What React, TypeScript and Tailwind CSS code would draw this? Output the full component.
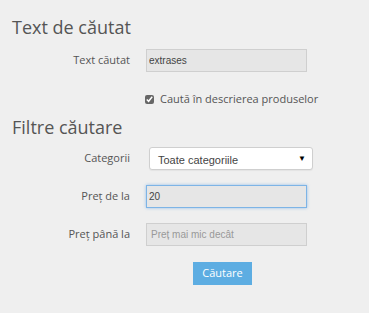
import React from 'react';

const sans = { fontFamily: '"Open Sans", "Liberation Sans", sans-serif' };
const arial = { fontFamily: '"Liberation Sans", Arial, sans-serif' };

function Row({ label, children, className = '' }: { label: string; children: React.ReactNode; className?: string }) {
  return (
    <div className={`flex h-[23px] items-center ${className}`}>
      <label className="w-[130px] text-right text-[11px] text-[#555]">{label}</label>
      <div className="ml-[16px] flex">{children}</div>
    </div>
  );
}

export default function App() {
  const [price, setPrice] = React.useState('20');
  const [desc, setDesc] = React.useState(true);

  return (
    <div className="min-h-[313px] w-[369px] bg-[#efefef] pt-[14px]" style={sans}>
      <h2 className="pl-[12px] text-[18px] leading-[26px] text-[#555]">Text de căutat</h2>
      <Row label="Text căutat" className="mt-[9px]">
        <input
          className="h-[23px] w-[161px] border border-[#cfcfcf] bg-[#e6e6e6] px-[2px] text-[10px] text-[#444] outline-none"
          style={arial}
          defaultValue="extrases"
        />
      </Row>
      <div className="mt-[20px] flex items-center pl-[145px]">
        <input
          type="checkbox"
          checked={desc}
          onChange={(e) => setDesc(e.target.checked)}
          className="m-0 h-[9px] w-[9px] accent-[#666]"
        />
        <span className="ml-[6px] text-[11px] leading-[14px] text-[#555]">Caută în descrierea produselor</span>
      </div>
      <h2 className="mt-[8px] pl-[12px] text-[18px] leading-[26px] text-[#555]">Filtre căutare</h2>
      <Row label="Categorii" className="mt-[7px]">
        <div className="relative ml-[3px] h-[23px] w-[164px] rounded-[3px] border border-[#cfcfcf] bg-white shadow-[0_1px_1px_rgba(0,0,0,0.05)]">
          <span className="absolute left-[8px] top-[4px] text-[11px] text-[#444]" style={arial}>
            Toate categoriile
          </span>
          <span className="absolute right-[6px] top-[4px] text-[8px] text-black">▼</span>
        </div>
      </Row>
      <Row label="Preț de la" className="mt-[15px]">
        <input
          className="h-[23px] w-[161px] border border-[#7db4e6] bg-[#e6e6e6] px-[2px] text-[10px] text-[#444] shadow-[0_0_3px_rgba(90,160,230,0.6)] outline-none"
          style={arial}
          value={price}
          onChange={(e) => setPrice(e.target.value)}
        />
      </Row>
      <Row label="Preț până la" className="mt-[15px]">
        <input
          className="h-[23px] w-[161px] border border-[#cfcfcf] bg-[#e6e6e6] px-[4px] text-[10px] text-[#555] outline-none placeholder:text-[#999]"
          style={arial}
          placeholder="Preț mai mic decât"
        />
      </Row>
      <div className="mt-[16px] flex pl-[193px]">
        <button className="h-[23px] w-[59px] bg-[#5dade2] text-[11px] text-white">Căutare</button>
      </div>
    </div>
  );
}
